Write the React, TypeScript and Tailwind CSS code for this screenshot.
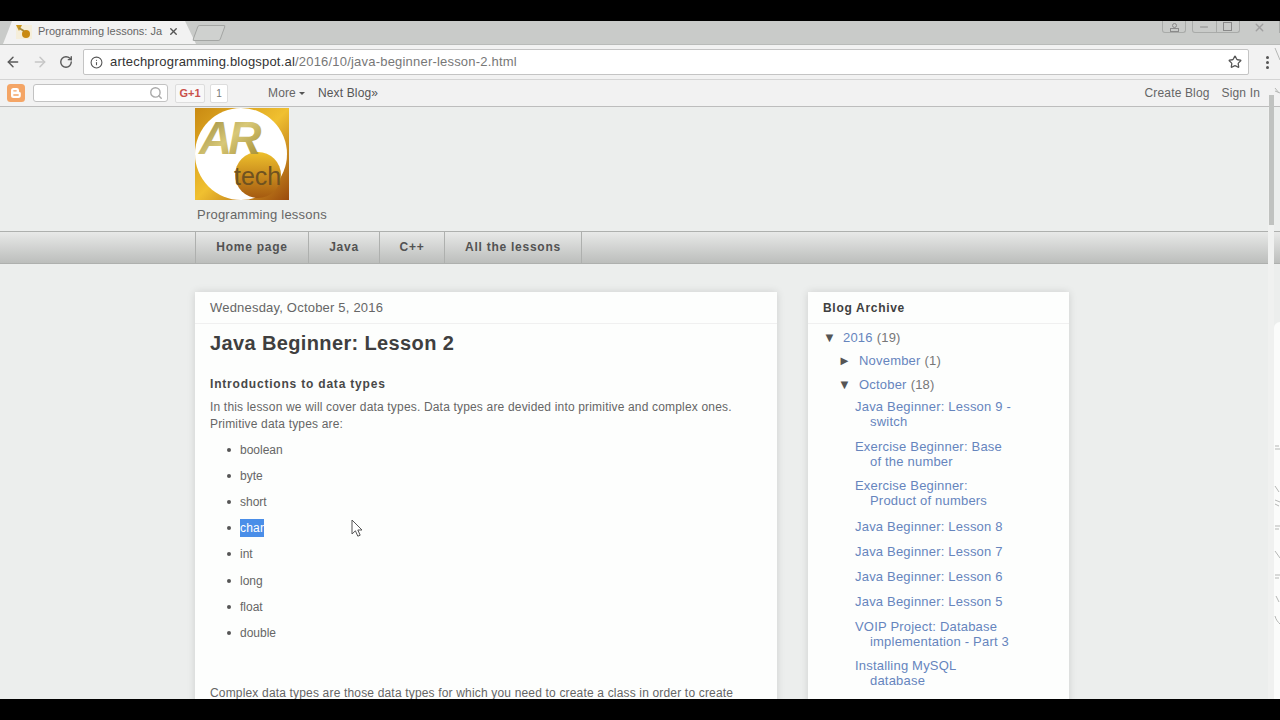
import { ArrowLeft, ArrowRight, RotateCw, Info, Star, Search, Minus, X } from 'lucide-react';

const lessonTypes = ['boolean', 'byte', 'short', 'char', 'int', 'long', 'float', 'double'];

const archiveLinks = [
  { first: 'Java Beginner: Lesson 9 -', rest: 'switch', h: 'h-[40px]' },
  { first: 'Exercise Beginner: Base', rest: 'of the number', h: 'h-[39px]' },
  { first: 'Exercise Beginner:', rest: 'Product of numbers', h: 'h-[41px]' },
  { first: 'Java Beginner: Lesson 8', h: 'h-[25px]' },
  { first: 'Java Beginner: Lesson 7', h: 'h-[25px]' },
  { first: 'Java Beginner: Lesson 6', h: 'h-[25px]' },
  { first: 'Java Beginner: Lesson 5', h: 'h-[25px]' },
  { first: 'VOIP Project: Database', rest: 'implementation - Part 3', h: 'h-[39px]' },
  { first: 'Installing MySQL', rest: 'database', h: 'h-[40px]' },
];

// Логотип блога
const Logo = () => (
  <svg width="94" height="92" viewBox="0 0 94 92" className="block">
    <defs>
      <linearGradient id="bg" x1="0" y1="0" x2="1" y2="1">
        <stop offset="0" stopColor="#c98a12" />
        <stop offset="0.5" stopColor="#f0c030" />
        <stop offset="1" stopColor="#9a4a0c" />
      </linearGradient>
      <linearGradient id="ball" x1="0" y1="0" x2="0" y2="1">
        <stop offset="0" stopColor="#eec02c" />
        <stop offset="1" stopColor="#a55a10" />
      </linearGradient>
      <linearGradient id="ar" x1="0" y1="0" x2="1" y2="1">
        <stop offset="0" stopColor="#8a7a2c" />
        <stop offset="0.5" stopColor="#d8c878" />
        <stop offset="1" stopColor="#9c8426" />
      </linearGradient>
    </defs>
    <rect width="94" height="92" fill="url(#bg)" />
    <circle cx="46" cy="46" r="46" fill="#fff" />
    <circle cx="63" cy="67" r="23" fill="url(#ball)" />
    <text x="4" y="46" fontFamily="Liberation Sans" fontStyle="italic" fontWeight="700" fontSize="46" letterSpacing="-4" fill="url(#ar)">AR</text>
    <text x="39" y="77" fontFamily="Liberation Sans" fontSize="25" fill="#6f5220">tech</text>
  </svg>
);

const BloggerIcon = () => (
  <svg width="18" height="18" viewBox="0 0 18 18" className="ml-[7px] shrink-0">
    <rect width="18" height="18" rx="3.5" fill="#f4a566" />
    <path d="M6.5 4h3.2A2.3 2.3 0 0 1 12 6.3v1a1 1 0 0 0 1 1 .8.8 0 0 1 .8.8v2.4A2.5 2.5 0 0 1 11.3 14H6.5A2.5 2.5 0 0 1 4 11.5v-5A2.5 2.5 0 0 1 6.5 4z" fill="#fff" />
    <path d="M6.8 6.8h2.4M6.8 11h4.4" stroke="#f4a566" strokeWidth="1.3" strokeLinecap="round" />
  </svg>
);

// Обрывки соседнего окна у правого края кадра
const EdgeMarks = () => (
  <svg className="absolute right-0 top-[44px]" width="6" height="640" viewBox="0 0 6 640" fill="none" stroke="#b5b7b5" strokeWidth="1">
    <path d="M1 4l5 12M1 44l4 5M1 47l5 2" />
    <path d="M1 402h4M1 405h5M1 442l4 6M1 456l5 2M1 460l4 2M1 482h5M1 485h4M1 507l5 7M1 531h5M1 534h4M2 552l3 6M1 572c1 4 3 6 5 8" />
  </svg>
);

const BrowserChrome = () => (
  <>
    <div className="h-[23px] bg-[#c9cbc9] flex items-end relative shrink-0">
      <div className="ml-[3px] w-[193px] h-[23px] bg-[#f2f2f2] flex items-center pl-[13px] pb-[2px] [clip-path:polygon(0_100%,9px_0,182px_0,100%_100%)]">
        <svg width="16" height="14" viewBox="0 0 16 14" className="shrink-0">
          <rect width="16" height="14" fill="#f5eeda" />
          <path d="M0 0h6L3 6z" fill="#c9961f" />
          <circle cx="10" cy="9" r="4" fill="#c98a12" />
          <path d="M3 3l5 3" stroke="#a88a3a" strokeWidth="2" />
        </svg>
        <span className="ml-[6px] w-[124px] whitespace-nowrap text-[11px] text-[#666]">Programming lessons: Ja</span>
        <X size={11} strokeWidth={3} className="text-[#555] ml-[6px]" />
      </div>
      <div className="-ml-[1px] mb-[3px] w-[28px] h-[16px] border border-[#a3a5a3] rounded-[2px] bg-[#cfd1cf] -skew-x-[20deg]" />
      <div className="ml-auto flex items-start self-start text-[#8a8a8a]">
        <div className="w-[24px] h-[12px] border border-t-0 border-[#a9aba9] rounded-b-[3px] flex flex-col items-center justify-end mr-[6px]">
          <div className="w-[5px] h-[5px] border border-[#8a8a8a] rounded-full" />
          <div className="w-[9px] h-[4px] border border-[#8a8a8a]" />
        </div>
        <div className="w-[48px] h-[12px] border border-t-0 border-[#a9aba9] rounded-b-[3px] flex">
          <div className="flex-1 flex items-center justify-center border-r border-[#a9aba9]">
            <Minus size={12} />
          </div>
          <div className="flex-1 flex items-center justify-center">
            <div className="w-[9px] h-[9px] border border-[#8a8a8a]" />
          </div>
        </div>
        <div className="w-[40px] h-[12px] flex items-center justify-center border-r border-[#a9aba9]">
          <X size={13} strokeWidth={2.5} className="text-[#a0a0a0]" />
        </div>
      </div>
    </div>
    <div className="h-[35px] bg-[#f2f2f2] border-t border-[#b9bbb9] flex items-center shrink-0">
      <ArrowLeft size={16} strokeWidth={2.2} className="ml-[5px] text-[#5a5a5a]" />
      <ArrowRight size={16} strokeWidth={2.2} className="ml-[11px] text-[#c6c6c6]" />
      <RotateCw size={14} strokeWidth={2.4} className="ml-[11px] text-[#5a5a5a]" />
      <div className="ml-[10px] w-[1166px] h-[26px] bg-white border border-[#c4c4c4] rounded-[2px] flex items-center pl-[6px] pr-[6px]">
        <Info size={13} strokeWidth={2} className="text-[#555]" />
        <span className="ml-[7px] text-[13px] tracking-[0.2px] text-[#333] whitespace-nowrap">
          artechprogramming.blogspot.al<span className="text-[#777]">/2016/10/java-beginner-lesson-2.html</span>
        </span>
        <Star size={14} strokeWidth={2.2} className="ml-auto text-[#555]" />
      </div>
      <div className="ml-[17px] flex flex-col gap-[2px]">
        <div className="w-[3px] h-[3px] rounded-full bg-[#555]" />
        <div className="w-[3px] h-[3px] rounded-full bg-[#555]" />
        <div className="w-[3px] h-[3px] rounded-full bg-[#555]" />
      </div>
    </div>
  </>
);

const BloggerBar = () => (
  <div className="h-[28px] bg-[#f2f2f2] border-t border-[#d4d4d4] border-b border-b-[#bdbdbd] flex items-center shrink-0 text-[12px] tracking-[0.15px] text-[#666]">
    <BloggerIcon />
    <div className="ml-[8px] w-[135px] h-[18px] bg-white border border-[#c2c2c2] rounded-[3px] flex items-center justify-end pr-[4px]">
      <Search size={14} strokeWidth={2.4} className="text-[#aaa]" />
    </div>
    <div className="ml-[7px] w-[30px] h-[19px] bg-[#f8f8f8] border border-[#ddd] rounded-[2px] flex items-center justify-center text-[11px] tracking-normal font-bold text-[#c9504a]">G+1</div>
    <div className="ml-[5px] w-[18px] h-[19px] bg-white border border-[#ddd] rounded-[2px] flex items-center justify-center text-[10px] text-[#777]">1</div>
    <span className="ml-[40px]">More</span>
    <div className="ml-[3px] w-0 h-0 border-x-[3px] border-x-transparent border-t-[3px] border-t-[#555]" />
    <span className="ml-[13px] text-[#555]">Next Blog»</span>
    <span className="ml-auto">Create Blog</span>
    <span className="ml-[12px] mr-[20px]">Sign In</span>
  </div>
);

const NavTab = ({ label, w }: { label: string; w: string }) => (
  <div className={`${w} h-full border-r border-[#aeb0ae] flex items-center justify-center pb-[2px]`}>
    {label}
  </div>
);

const Post = () => (
  <div className="w-[582px] bg-[#fdfefd] shadow-[0_0_8px_rgba(0,0,0,0.13)] text-[#666] shrink-0 h-[420px]">
    <div className="h-[32px] border-b border-[#f0f0f0] pl-[15px] flex items-center text-[13px] tracking-[0.2px] text-[#666]">
      Wednesday, October 5, 2016
    </div>
    <div className="pl-[15px] pt-[6px]">
      <h3 className="text-[20px] leading-[26px] font-bold text-[#3f3f3f] tracking-[0.37px]">Java Beginner: Lesson 2</h3>
      <h4 className="mt-[21px] text-[12px] leading-[15px] font-bold text-[#484848] tracking-[0.8px]">Introductions to data types</h4>
      <p className="mt-[7px] text-[12px] leading-[17px] tracking-[0.175px] w-[560px]">
        In this lesson we will cover data types. Data types are devided into primitive and complex ones.
        <br />
        Primitive data types are:
      </p>
      <ul className="mt-[4px] ml-[30px] text-[12px]">
        {lessonTypes.map((t) => (
          <li key={t} className="h-[26.1px] flex items-center relative">
            <span className="absolute left-[-13px] w-[4px] h-[4px] rounded-full bg-[#555]" />
            {t === 'char' ? <span className="bg-[#4a8ee8] text-white tracking-[0.2px]">{t}</span> : t}
          </li>
        ))}
      </ul>
      <p className="mt-[39px] text-[12px] leading-[17px] tracking-[0.17px] whitespace-nowrap">
        Complex data types are those data types for which you need to create a class in order to create
      </p>
    </div>
  </div>
);

const Sidebar = () => (
  <div className="ml-[31px] w-[261px] bg-[#fdfefd] shadow-[0_0_8px_rgba(0,0,0,0.13)] shrink-0 h-[420px] text-[13px] tracking-[0.2px] text-[#777]">
    <div className="h-[32px] border-b border-[#f0f0f0] pl-[15px] flex items-center text-[12px] font-bold text-[#3f3f3f] tracking-[0.7px]">
      Blog Archive
    </div>
    <div className="pl-[15px] pt-[2px]">
      <div className="h-[23px] flex items-center">
        <span className="text-[13px] text-[#555] w-[20px]">▼</span>
        <span className="text-[#6685bd]">2016</span>
        <span className="ml-[4px]">(19)</span>
      </div>
      <div className="h-[24px] flex items-center pl-[15px]">
        <span className="text-[13px] text-[#555] w-[21px]">►</span>
        <span className="text-[#6685bd]">November</span>
        <span className="ml-[4px]">(1)</span>
      </div>
      <div className="h-[24px] flex items-center pl-[15px]">
        <span className="text-[13px] text-[#555] w-[21px]">▼</span>
        <span className="text-[#6685bd]">October</span>
        <span className="ml-[4px]">(18)</span>
      </div>
      <div className="pl-[32px] pt-[2px] text-[#6685bd] leading-[15px]">
        {archiveLinks.map((l) => (
          <div key={l.first} className={l.h}>
            <div>{l.first}</div>
            {l.rest && <div className="pl-[15px]">{l.rest}</div>}
          </div>
        ))}
      </div>
    </div>
  </div>
);

export default function App() {
  return (
    <div className="relative h-[720px] w-[1280px] overflow-hidden bg-black flex flex-col font-['Liberation_Sans',Arial,sans-serif]">
      <div className="h-[21px] shrink-0" />
      <BrowserChrome />
      <BloggerBar />
      <div className="flex-1 bg-[#eceeed] overflow-hidden relative">
        <div className="pl-[195px] pt-[1px] h-[124px]">
          <Logo />
          <div className="ml-[2px] mt-[5px] text-[13px] tracking-[0.22px] text-[#666]">Programming lessons</div>
        </div>
        <div className="h-[33px] border-y border-[#aeb0ae] bg-gradient-to-b from-[#e8e9e8] to-[#bcbebc] flex pl-[195px] text-[12px] font-bold text-[#525252] tracking-[0.75px]">
          <div className="border-l border-[#aeb0ae] flex h-full">
            <NavTab label="Home page" w="w-[113px]" />
            <NavTab label="Java" w="w-[71px]" />
            <NavTab label="C++" w="w-[65px]" />
            <NavTab label="All the lessons" w="w-[137px]" />
          </div>
        </div>
        <div className="flex pl-[195px] pt-[28px]">
          <Post />
          <Sidebar />
        </div>
        {/* дорожка прокрутки и край окна поверх страницы */}
        <div className="absolute right-[6px] top-0 w-[6px] h-full bg-[#f0f1f0]" />
        <div className="absolute right-0 top-[215px] w-[6px] h-[377px] bg-[#fbfcfb] rounded-tl-[6px]" />
        <svg className="absolute left-[351px] top-[412px]" width="12" height="19" viewBox="0 0 12 19">
          <path d="M1 1v14l3.4-3.2 2.4 5.4 2.4-1-2.4-5.2H11z" fill="#fff" stroke="#555" strokeWidth="1" />
        </svg>
      </div>
      <div className="h-[21px] shrink-0" />
      {/* ползунок заходит на панель Blogger */}
      <div className="absolute right-[6px] top-[95px] w-[5px] h-[130px] bg-[#c0c2c0]" />
      <EdgeMarks />
    </div>
  );
}
